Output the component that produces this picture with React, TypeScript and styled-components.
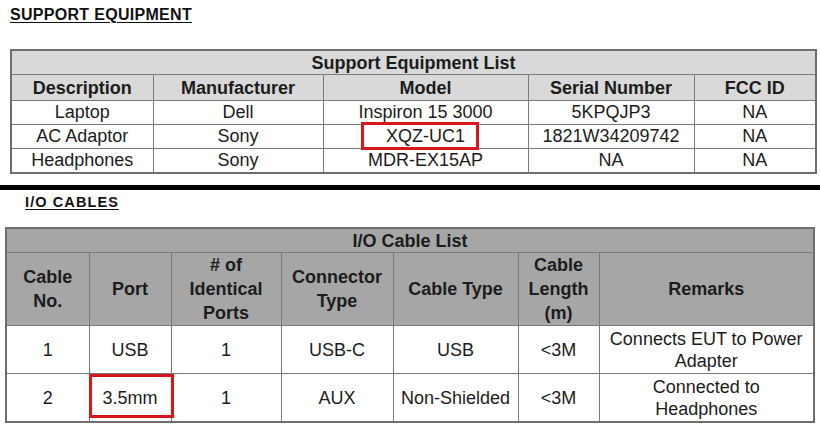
import styled, { createGlobalStyle } from 'styled-components';

const GlobalStyle = createGlobalStyle`
  html, body {
    margin: 0;
    padding: 0;
    background: #ffffff;
  }
  body {
    font-family: 'Liberation Sans', Arial, sans-serif;
    color: #1c1c1c;
  }
`;

const Page = styled.div`
  width: 820px;
  height: 426px;
  overflow: hidden;
  background: #ffffff;
`;

const SectionTitle = styled.h2<{ indent: number; top: number; small?: boolean }>`
  margin: ${(p) => p.top}px 0 0 0;
  padding-left: ${(p) => p.indent}px;
  font-size: ${(p) => (p.small ? '14.5px' : '16px')};
  font-weight: bold;
  text-decoration: underline;
  text-underline-offset: 2px;
  letter-spacing: ${(p) => (p.small ? '1.1px' : '0.3px')};
  line-height: 18px;
  color: #111;
`;

const Divider = styled.div`
  height: 5px;
  background: #000;
  margin-top: 11px;
`;

const Table = styled.table<{ left: number; top: number; width: number }>`
  margin-left: ${(p) => p.left}px;
  margin-top: ${(p) => p.top}px;
  width: ${(p) => p.width}px;
  border-collapse: collapse;
  table-layout: fixed;
  border: 2px solid #6e6e6e;
  font-size: 18px;
`;

const Col = styled.col<{ w: number }>`
  width: ${(p) => p.w}px;
`;

const Caption = styled.th<{ shade: string }>`
  background: ${(p) => p.shade};
  border: 1px solid #7a7a7a;
  font-weight: bold;
  height: 23px;
  padding: 0;
  line-height: 22px;
  text-align: center;
`;

const Head = styled.th<{ shade: string; tall?: boolean }>`
  background: ${(p) => p.shade};
  border: 1px solid #7a7a7a;
  font-weight: bold;
  padding: 0 4px;
  height: ${(p) => (p.tall ? '71px' : '25px')};
  line-height: 24px;
  text-align: center;
  vertical-align: middle;
`;

const Cell = styled.td<{ tall?: boolean }>`
  position: relative;
  border: 1px solid #7a7a7a;
  padding: 0 4px;
  height: ${(p) => (p.tall ? '47px' : '23px')};
  line-height: ${(p) => (p.tall ? '22px' : '23px')};
  text-align: center;
  vertical-align: middle;
  font-weight: normal;
`;

const Highlight = styled.span<{ x: number; y: number; w: number; h: number }>`
  position: absolute;
  left: ${(p) => p.x}px;
  top: ${(p) => p.y}px;
  width: ${(p) => p.w}px;
  height: ${(p) => p.h}px;
  box-sizing: border-box;
  border: 3px solid #d8161b;
  pointer-events: none;
`;

const equipmentCols = [142, 170, 205, 166, 122];
const equipmentHead = ['Description', 'Manufacturer', 'Model', 'Serial Number', 'FCC ID'];
const equipment = [
  ['Laptop', 'Dell', 'Inspiron 15 3000', '5KPQJP3', 'NA'],
  ['AC Adaptor', 'Sony', 'XQZ-UC1', '1821W34209742', 'NA'],
  ['Headphones', 'Sony', 'MDR-EX15AP', 'NA', 'NA'],
];

const cableCols = [83, 82, 110, 112, 125, 81, 215];
const cableHead = [
  ['Cable', 'No.'],
  ['Port'],
  ['# of', 'Identical', 'Ports'],
  ['Connector', 'Type'],
  ['Cable Type'],
  ['Cable', 'Length', '(m)'],
  ['Remarks'],
];
const cables = [
  ['1', 'USB', '1', 'USB-C', 'USB', '<3M', 'Connects EUT to Power Adapter'],
  ['2', '3.5mm', '1', 'AUX', 'Non-Shielded', '<3M', 'Connected to Headphones'],
];

export default function App() {
  const lightGray = '#d9d9d9';
  const darkGray = '#a6a6a6';
  return (
    <Page>
      <GlobalStyle />
      <SectionTitle indent={10} top={6}>
        SUPPORT EQUIPMENT
      </SectionTitle>
      <Table left={10} top={25} width={805}>
        <colgroup>
          {equipmentCols.map((w, i) => (
            <Col key={i} w={w} />
          ))}
        </colgroup>
        <thead>
          <tr>
            <Caption shade={lightGray} colSpan={5}>
              Support Equipment List
            </Caption>
          </tr>
          <tr>
            {equipmentHead.map((h) => (
              <Head key={h} shade={lightGray}>
                {h}
              </Head>
            ))}
          </tr>
        </thead>
        <tbody>
          {equipment.map((row, r) => (
            <tr key={r}>
              {row.map((v, c) => (
                <Cell key={c}>
                  {v}
                  {r === 1 && c === 2 && <Highlight x={37} y={-3} w={118} h={28} />}
                </Cell>
              ))}
            </tr>
          ))}
        </tbody>
      </Table>
      <Divider />
      <SectionTitle indent={25} top={3} small>
        I/O CABLES
      </SectionTitle>
      <Table left={5} top={16} width={808}>
        <colgroup>
          {cableCols.map((w, i) => (
            <Col key={i} w={w} />
          ))}
        </colgroup>
        <thead>
          <tr>
            <Caption shade={darkGray} colSpan={7}>
              I/O Cable List
            </Caption>
          </tr>
          <tr>
            {cableHead.map((lines, i) => (
              <Head key={i} shade={darkGray} tall>
                {lines.map((l, j) => (
                  <span key={j}>
                    {j > 0 && <br />}
                    {l}
                  </span>
                ))}
              </Head>
            ))}
          </tr>
        </thead>
        <tbody>
          {cables.map((row, r) => (
            <tr key={r}>
              {row.map((v, c) => (
                <Cell key={c} tall>
                  {v}
                  {r === 1 && c === 1 && <Highlight x={-1} y={0} w={85} h={44} />}
                </Cell>
              ))}
            </tr>
          ))}
        </tbody>
      </Table>
    </Page>
  );
}
